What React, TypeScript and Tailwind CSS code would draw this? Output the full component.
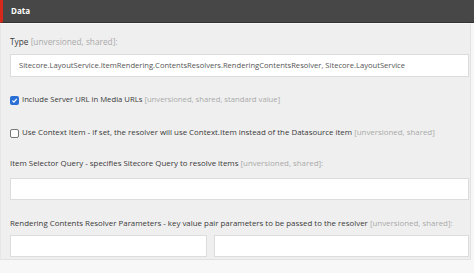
export default function App() {
  return (
    <div className="w-[474px] h-[273px] bg-[#f7f7f7] overflow-hidden" style={{ fontFamily: '"Open Sans", "Noto Sans", sans-serif' }}>
      <div className="h-[23px] bg-[#474747] flex items-center border-l-[3px] border-[#d6281b] border-b border-b-[#333]">
        <span className="pl-[8px] text-[8px] font-bold text-white">Data</span>
      </div>
      <div className="w-[471px] h-[237px] bg-[#efefef] border-r border-b border-[#e2e2e2] border-l border-l-[#e6e6e6] border-t border-t-[#f8f8f8] pl-[9px] pr-[1px] pt-[13px] text-[7.9px] text-[#3a3a3a]">
        <div className="h-[10px] leading-[10px] text-[8.3px]">
          Type <span className="text-[#aaa]">[unversioned, shared]:</span>
        </div>
        <div className="mt-[7px] h-[23px] bg-white border border-[#dcdcdc] flex items-center pl-[8px] text-[7.6px] text-[#555]">
          Sitecore.LayoutService.ItemRendering.ContentsResolvers.RenderingContentsResolver, Sitecore.LayoutService
        </div>
        <div className="mt-[18px] h-[10px] flex items-center gap-[3px]">
          <span className="w-[9px] h-[9px] rounded-[2px] bg-[#2a6fd6] flex items-center justify-center">
            <svg width="7" height="7" viewBox="0 0 10 10"><path d="M2 5.2 L4.2 7.4 L8.2 2.8" stroke="white" strokeWidth="1.8" fill="none" /></svg>
          </span>
          <span className="text-[7.7px]">Include Server URL in Media URLs <span className="text-[#aaa]">[unversioned, shared, standard value]</span></span>
        </div>
        <div className="mt-[23px] h-[10px] flex items-center gap-[3px]">
          <span className="w-[9px] h-[9px] rounded-[2px] bg-white border border-[#777]" />
          <span>Use Context Item - if set, the resolver will use Context.Item instead of the Datasource item <span className="text-[#aaa]">[unversioned, shared]</span></span>
        </div>
        <div className="mt-[20px] h-[10px] leading-[10px]">
          Item Selector Query - specifies Sitecore Query to resolve items <span className="text-[#aaa]">[unversioned, shared]:</span>
        </div>
        <div className="mt-[10px] h-[22px] bg-white border border-[#dcdcdc]" />
        <div className="mt-[18px] h-[10px] leading-[10px]">
          Rendering Contents Resolver Parameters - key value pair parameters to be passed to the resolver <span className="text-[#aaa]">[unversioned, shared]:</span>
        </div>
        <div className="mt-[7px] flex gap-[7px]">
          <div className="w-[197px] h-[22px] bg-white border border-[#dcdcdc]" />
          <div className="flex-1 h-[22px] bg-white border border-[#dcdcdc]" />
        </div>
      </div>
    </div>
  );
}
